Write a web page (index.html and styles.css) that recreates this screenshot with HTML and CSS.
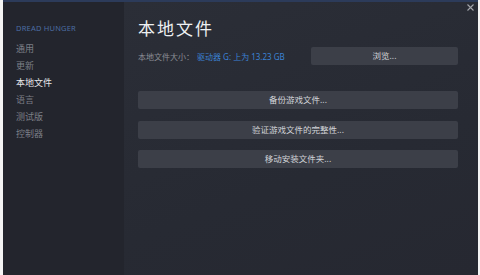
FILE: index.html
```html
<!DOCTYPE html>
<html lang="zh-CN">
<head>
<meta charset="utf-8">
<title>本地文件</title>
<link rel="stylesheet" href="styles.css">
</head>
<body>
<div class="window">
  <aside class="sidebar">
    <div class="game">DREAD HUNGER</div>
    <nav class="menu">
      <div class="item">通用</div>
      <div class="item">更新</div>
      <div class="item active">本地文件</div>
      <div class="item">语言</div>
      <div class="item">测试版</div>
      <div class="item">控制器</div>
    </nav>
  </aside>
  <main class="content">
    <svg class="close" width="7" height="7" viewBox="0 0 7 7"><path d="M0.5 0.5L6.5 6.5M6.5 0.5L0.5 6.5" stroke="#a3a5ab" stroke-width="1.1"/></svg>
    <h1 class="title">本地文件</h1>
    <div class="size-row">
      <div class="size">本地文件大小：<span class="link">驱动器 G: 上为 13.23 GB</span></div>
      <div class="btn browse">浏览...</div>
    </div>
    <div class="actions">
      <div class="btn">备份游戏文件...</div>
      <div class="btn">验证游戏文件的完整性...</div>
      <div class="btn">移动安装文件夹...</div>
    </div>
  </main>
</div>
</body>
</html>
```
FILE: styles.css
```css
html, body {
  margin: 0;
  padding: 0;
  background: #f4f4f4;
}
body {
  font-family: "Noto Sans", "Noto Sans CJK SC", sans-serif;
}
.window {
  display: flex;
  height: 275px;
  margin-left: 3px;
  margin-right: 2px;
  border-top: 2px solid #2c3b5a;
  box-sizing: border-box;
}
.sidebar {
  width: 121px;
  flex: none;
  background: #23252d;
  padding: 20px 0 0 13px;
  box-sizing: border-box;
}
.game {
  font-size: 7.5px;
  line-height: 12px;
  color: #4c6da3;
  letter-spacing: 0.2px;
}
.menu {
  margin-top: 6px;
  display: flex;
  flex-direction: column;
}
.item {
  font-size: 9px;
  line-height: 17px;
  color: #7c7f87;
}
.item.active {
  color: #e6e7ea;
}
.content {
  position: relative;
  flex: 1;
  background: linear-gradient(160deg, #2b2e37 0%, #272a33 60%, #262831 100%);
  padding: 15px 20px 0 14px;
  box-sizing: border-box;
}
.close {
  position: absolute;
  top: 2px;
  right: 4px;
}
.title {
  margin: 0;
  font-size: 17px;
  font-weight: normal;
  line-height: 24px;
  letter-spacing: 2px;
  color: #eef0f2;
}
.size-row {
  margin-top: 6px;
  display: flex;
  align-items: center;
  justify-content: space-between;
}
.size {
  font-size: 8px;
  color: #8a8d95;
}
.link {
  color: #3b82d4;
  margin-left: 3px;
}
.btn {
  height: 18px;
  line-height: 18px;
  background: #3c3f48;
  border-radius: 2px;
  text-align: center;
  font-size: 8.5px;
  color: #d2d4d8;
}
.browse {
  width: 147px;
}
.actions {
  margin-top: 26px;
  display: flex;
  flex-direction: column;
  gap: 11.5px;
}
```
